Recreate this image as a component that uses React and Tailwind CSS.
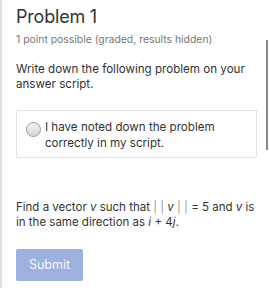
export default function App() {
  return (
    <div className="relative w-[269px] h-[288px] bg-white overflow-hidden font-['Inter',sans-serif]">
      <div className="h-full border-l-2 border-[#dcdcdc] pl-[14px] pr-3 pt-[5px]">
        <h2 className="text-[18px] leading-[24px] text-[#333] tracking-[-0.2px]">Problem 1</h2>
        <p className="mt-[4px] text-[10.4px] leading-[14px] text-[#777]">
          1 point possible (graded, results hidden)
        </p>
        <p className="mt-[15px] text-[11.6px] leading-[15px] text-[#333]">
          Write down the following problem on your answer script.
        </p>
        <div className="mt-[18px] w-[241px] h-[48px] border border-[#e4e4e4] flex items-start pl-[9px] pr-2 pt-[8px]">
          <span className="mt-[3px] w-[15px] h-[15px] shrink-0 rounded-full border border-[#999] bg-gradient-to-b from-[#f4f4f4] to-[#d6d6d6]" />
          <span className="ml-[4px] text-[11.6px] leading-[16px] text-[#333]">
            I have noted down the problem correctly in my script.
          </span>
        </div>
        <p className="mt-[42px] text-[11.5px] leading-[15px] text-[#333]">
          Find a vector <i>v</i> such that <span className="text-[#999]">| |</span> <i>v</i> <span className="text-[#999]">| |</span> = 5 and <i>v</i> is in the same direction as <i>i</i> + 4<i>j</i>.
        </p>
        <button className="mt-[19px] w-[67px] h-[32px] rounded-[2px] bg-[#9db1df] text-[#f4f6fb] text-[12.5px]">
          Submit
        </button>
      </div>
      <div className="absolute left-[266px] top-[40px] w-[2px] h-[110px] bg-[#8a8a8a]" />
    </div>
  );
}
